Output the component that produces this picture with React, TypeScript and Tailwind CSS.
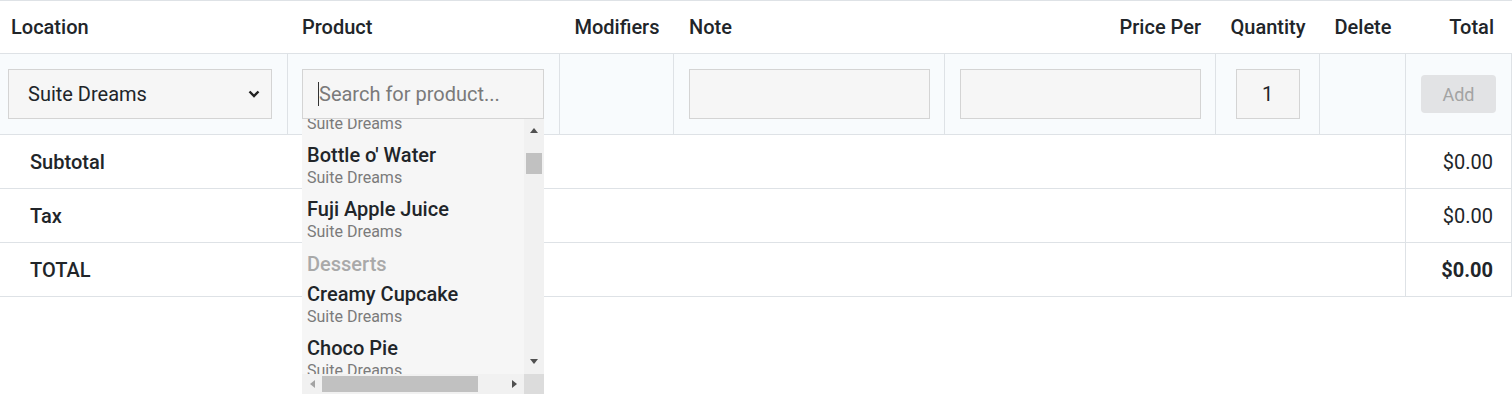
import { ChangeEvent, useState } from "react";

const COLS =
  "grid grid-cols-[288px_272px_114px_271px_271px_104px_86px_106px]";

interface Product {
  name: string;
  location: string;
}

interface Group {
  heading?: string;
  items: Product[];
}

// list is shown scrolled a bit, so the first item's title sits under the input
const groups: Group[] = [
  {
    items: [
      { name: "Bottle o' Soda", location: "Suite Dreams" },
      { name: "Bottle o' Water", location: "Suite Dreams" },
      { name: "Fuji Apple Juice", location: "Suite Dreams" },
    ],
  },
  {
    heading: "Desserts",
    items: [
      { name: "Creamy Cupcake", location: "Suite Dreams" },
      { name: "Choco Pie", location: "Suite Dreams" },
    ],
  },
];

function Arrow({ dir, tone }: { dir: "up" | "down" | "left" | "right"; tone: string }) {
  const vertical = dir === "up" || dir === "down";
  const pts = {
    up: "0,5 4,0 8,5",
    down: "0,0 8,0 4,5",
    left: "5,0 5,8 0,4",
    right: "0,0 5,4 0,8",
  }[dir];
  return (
    <svg
      width={vertical ? 8 : 5}
      height={vertical ? 5 : 8}
      viewBox={vertical ? "0 0 8 5" : "0 0 5 8"}
      className={tone}
    >
      <polygon points={pts} fill="currentColor" />
    </svg>
  );
}

function ProductDropdown() {
  return (
    <div className="absolute left-[14px] top-[65px] z-10 flex h-[275px] w-[242px] flex-col bg-[#f6f6f6]">
      <div className="flex min-h-0 flex-1">
        <div className="min-w-0 flex-1 overflow-hidden">
          <div className="-mt-[35px]">
            {groups.map((g, gi) => (
              <div key={gi}>
                {g.heading && (
                  <div className="px-[5px] pb-[1px] pt-[6px] text-[20px] font-medium leading-[24px] text-[#a9a9a9]">
                    {g.heading}
                  </div>
                )}
                {g.items.map((p) => (
                  <div key={p.name} className="whitespace-nowrap px-[5px] py-[4px]">
                    <div className="text-[20px] font-medium leading-[26px] text-[#212529]">
                      {p.name}
                    </div>
                    <div className="text-[16px] leading-[20px] text-[#7b7b7b]">
                      {p.location}
                    </div>
                  </div>
                ))}
              </div>
            ))}
          </div>
        </div>
        {/* vertical scrollbar */}
        <div className="flex w-[20px] flex-col bg-[#f1f1f1]">
          <div className="flex h-[22px] items-center justify-center">
            <Arrow dir="up" tone="text-[#505050]" />
          </div>
          <div className="flex-1 px-[2px]">
            <div className="mt-[12px] h-[21px] bg-[#c1c1c1]" />
          </div>
          <div className="flex h-[26px] items-center justify-center">
            <Arrow dir="down" tone="text-[#505050]" />
          </div>
        </div>
      </div>
      {/* horizontal scrollbar */}
      <div className="flex h-[20px]">
        <div className="flex flex-1 items-center bg-[#f1f1f1]">
          <div className="flex w-[20px] justify-center">
            <Arrow dir="left" tone="text-[#a3a3a3]" />
          </div>
          <div className="h-[16px] w-[156px] bg-[#c1c1c1]" />
          <div className="flex flex-1 justify-end pr-[7px]">
            <Arrow dir="right" tone="text-[#505050]" />
          </div>
        </div>
        <div className="w-[20px] bg-[#dcdcdc]" />
      </div>
    </div>
  );
}

function SummaryRow({ label, value, strong }: { label: string; value: string; strong?: boolean }) {
  return (
    <div className="grid grid-cols-[1fr_106px] border-b border-[#dee2e6]">
      <div className="flex h-[53px] items-center border-r border-[#dee2e6] pl-[30px] text-[20px] font-medium">
        {label}
      </div>
      <div
        className={`flex h-[53px] items-center justify-end border-r border-[#dee2e6] pr-[18px] text-[20px] ${
          strong ? "font-bold" : ""
        }`}
      >
        {value}
      </div>
    </div>
  );
}

export default function App() {
  const [location, setLocation] = useState("Suite Dreams");
  const [search, setSearch] = useState("");
  const [qty, setQty] = useState("1");

  const inputCls =
    "h-[50px] border border-[#d4d4d4] bg-[#f6f6f6] text-[20px] text-[#212529] outline-none";

  return (
    <div className="min-h-screen bg-white font-['Roboto',sans-serif] text-[#212529]">
      {/* header */}
      <div className={`${COLS} h-[54px] border-y border-[#dee2e6] text-[20px] font-medium`}>
        <div className="flex items-center pl-[11px]">Location</div>
        <div className="flex items-center pl-[14px]">Product</div>
        <div className="flex items-center justify-center">Modifiers</div>
        <div className="flex items-center pl-[15px]">Note</div>
        <div className="flex items-center justify-end pr-[15px]">Price Per</div>
        <div className="flex items-center justify-center">Quantity</div>
        <div className="flex items-center justify-center">Delete</div>
        <div className="flex items-center justify-end pr-[18px]">Total</div>
      </div>

      {/* entry row */}
      <div className={`${COLS} border-b border-[#dee2e6] bg-[#f8fbfd]`}>
        <div className="flex h-[80px] items-center border-r border-[#dee2e6] pl-[8px]">
          <div className="relative">
            <select
              value={location}
              onChange={(e: ChangeEvent<HTMLSelectElement>) => setLocation(e.target.value)}
              className={`${inputCls} w-[264px] appearance-none pl-[19px]`}
            >
              <option>Suite Dreams</option>
              <option>Main Concourse</option>
            </select>
            <svg
              width="12"
              height="8"
              viewBox="0 0 12 8"
              className="pointer-events-none absolute right-[12px] top-[21px]"
            >
              <polyline points="1.5,1.5 6,6 10.5,1.5" fill="none" stroke="#222" strokeWidth="2.4" />
            </svg>
          </div>
        </div>
        <div className="relative flex h-[80px] items-center border-r border-[#dee2e6] pl-[14px]">
          <input
            autoFocus
            value={search}
            onChange={(e) => setSearch(e.target.value)}
            placeholder="Search for product..."
            className={`${inputCls} w-[242px] pl-[16px] placeholder:text-[#7a7a7a]`}
          />
          {/* text caret */}
          <div className="pointer-events-none absolute left-[30px] top-[28px] h-[24px] w-px bg-[#333]" />
          <ProductDropdown />
        </div>
        <div className="h-[80px] border-r border-[#dee2e6]" />
        <div className="flex h-[80px] items-center border-r border-[#dee2e6] pl-[15px]">
          <input className={`${inputCls} w-[241px] px-3`} />
        </div>
        <div className="flex h-[80px] items-center border-r border-[#dee2e6] pl-[15px]">
          <input className={`${inputCls} w-[241px] px-3`} />
        </div>
        <div className="flex h-[80px] items-center justify-center border-r border-[#dee2e6]">
          <input
            value={qty}
            onChange={(e) => setQty(e.target.value)}
            className={`${inputCls} w-[64px] text-center`}
          />
        </div>
        <div className="h-[80px] border-r border-[#dee2e6]" />
        <div className="flex h-[80px] items-center justify-center border-r border-[#dee2e6]">
          <button
            disabled
            className="h-[38px] w-[75px] rounded-[4px] bg-[#e2e3e5] text-[18px] text-[#a3a3a3]"
          >
            Add
          </button>
        </div>
      </div>

      <SummaryRow label="Subtotal" value="$0.00" />
      <SummaryRow label="Tax" value="$0.00" />
      <SummaryRow label="TOTAL" value="$0.00" strong />
    </div>
  );
}
